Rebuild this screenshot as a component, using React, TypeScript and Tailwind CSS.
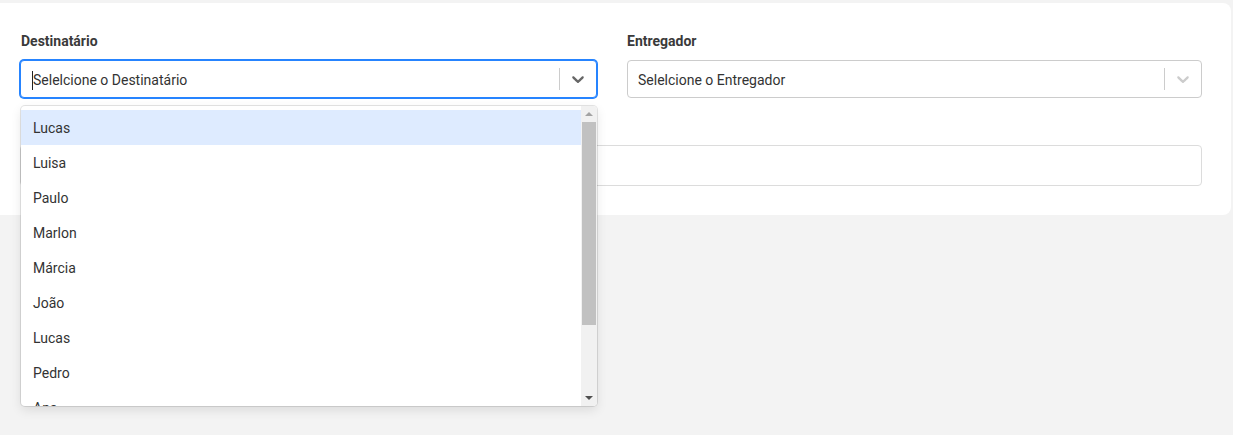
import React from 'react'

const options = ['Lucas', 'Luisa', 'Paulo', 'Marlon', 'Márcia', 'João', 'Lucas', 'Pedro', 'Ana', 'Carlos', 'Beatriz']

function Chevron({ color }: { color: string }) {
  return (
    <svg width="20" height="20" viewBox="0 0 20 20" fill={color} aria-hidden="true">
      <path d="M4.516 7.548c0.436-0.446 1.043-0.481 1.576 0l3.908 3.747 3.908-3.747c0.533-0.481 1.141-0.446 1.574 0 0.436 0.445 0.408 1.197 0 1.615-0.406 0.418-4.695 4.502-4.695 4.502-0.217 0.223-0.502 0.335-0.787 0.335s-0.57-0.112-0.789-0.335c0 0-4.287-4.084-4.695-4.502s-0.436-1.17 0-1.615z" />
    </svg>
  )
}

function Scrollbar() {
  return (
    <div className="w-[16px] shrink-0 bg-[#f1f1f1] flex flex-col items-center">
      {/* up arrow */}
      <div className="h-[16px] w-full flex items-center justify-center">
        <div className="w-0 h-0 border-l-[4px] border-r-[4px] border-b-[4px] border-l-transparent border-r-transparent border-b-[#a3a3a3]" />
      </div>
      <div className="flex-1 w-full px-[1px]">
        <div className="w-full h-[203px] bg-[#c1c1c1]" />
      </div>
      {/* down arrow */}
      <div className="h-[16px] w-full flex items-center justify-center">
        <div className="w-0 h-0 border-l-[4px] border-r-[4px] border-t-[4px] border-l-transparent border-r-transparent border-t-[#505050]" />
      </div>
    </div>
  )
}

export default function App() {
  return (
    <div className="min-h-[435px] bg-[#f3f3f3] pt-[3px] pr-[2px] font-['Roboto','Liberation_Sans',sans-serif] text-[#333]">
      <div className="bg-white rounded-r-lg pt-[28px] pb-[29px] pl-[20px] pr-[29px]">
        {/* Row 1 */}
        <div className="grid grid-cols-[577px_1fr] gap-[30px]">
          <div>
            <label className="block h-5 leading-5 text-sm font-bold text-[#3a3a3a] mb-[9px] pl-[1px]">Destinatário</label>
            <div className="relative">
              <div className="h-[38px] flex items-center rounded border border-[#2684FF] shadow-[0_0_0_1px_#2684FF] bg-white">
                <div className="flex-1 flex items-center pl-[11px] pt-[2px] text-sm">
                  <span className="w-px h-[19px] bg-[#222]" />
                  <span className="text-[#333]">Selelcione o Destinatário</span>
                </div>
                <span className="w-px h-[22px] bg-[#ccc]" />
                <div className="px-[8px] flex items-center">
                  <Chevron color="#666" />
                </div>
              </div>

              {/* Menu */}
              <div className="absolute z-10 left-[1px] right-0 top-[46px] h-[300px] bg-white rounded overflow-hidden flex shadow-[0_0_0_1px_rgba(0,0,0,0.1),0_4px_11px_rgba(0,0,0,0.1)]">
                <div className="flex-1 overflow-hidden pt-[4px]">
                  {options.map((name, i) => (
                    <div
                      key={i}
                      className={`h-[35px] flex items-center px-[12px] pt-[1px] text-sm text-[#333] ${i === 0 ? 'bg-[#DEEBFF]' : ''}`}
                    >
                      {name}
                    </div>
                  ))}
                </div>
                <Scrollbar />
              </div>
            </div>
          </div>

          <div>
            <label className="block h-5 leading-5 text-sm font-bold text-[#3a3a3a] mb-[9px]">Entregador</label>
            <div className="h-[38px] flex items-center rounded border border-[#ccc] bg-white">
              <div className="flex-1 pl-[10px] pt-[2px] text-sm text-[#333]">Selelcione o Entregador</div>
              <span className="w-px h-[22px] bg-[#ccc]" />
              <div className="px-[8px] flex items-center">
                <Chevron color="#ccc" />
              </div>
            </div>
          </div>
        </div>

        {/* Row 2 */}
        <div className="mt-[18px]">
          <label className="block h-5 leading-5 text-sm font-bold text-[#3a3a3a] mb-[9px] pl-[6px]">Observação</label>
          <input className="block w-full h-[41px] rounded border border-[#dcdcdc] px-[10px] text-sm outline-none" />
        </div>
      </div>
    </div>
  )
}
